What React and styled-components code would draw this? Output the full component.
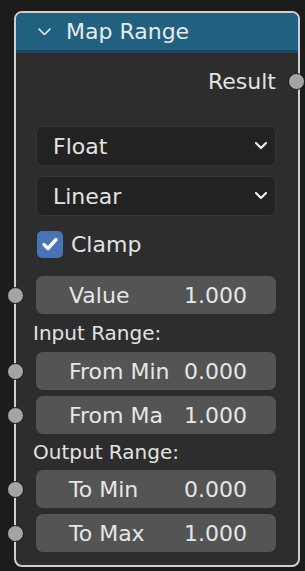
import React from 'react'
import styled, { createGlobalStyle } from 'styled-components'

const GlobalStyle = createGlobalStyle`
  body {
    margin: 0;
    background: #1c1c1c;
    font-family: "DejaVu Sans", "Noto Sans", sans-serif;
  }
`

const Page = styled.div`
  padding: 11px 5px 4px 14px;
`

const Node = styled.div`
  box-sizing: border-box;
  width: 286px;
  border: 2px solid #cfcfcf;
  border-radius: 8px;
  background: #2d2d2d;
`

const Header = styled.div`
  display: flex;
  align-items: center;
  gap: 15px;
  height: 37px;
  padding-left: 22px;
  background: #22607f;
  border-bottom: 3px solid #1b4760;
  border-radius: 6px 6px 0 0;
  color: #e4ebef;
  font-size: 22px;
`

const Body = styled.div`
  display: flex;
  flex-direction: column;
  padding: 14px 22px 13px 20px;
`

const Row = styled.div`
  position: relative;
  display: flex;
  align-items: center;
  height: ${p => p.h || 38}px;
  margin-top: ${p => p.mt || 0}px;
  justify-content: ${p => (p.right ? 'flex-end' : 'flex-start')};
`

const Label = styled.span`
  color: #e2e2e2;
  font-size: 22px;
`

const Heading = styled.div`
  display: flex;
  align-items: center;
  height: ${p => p.h}px;
  margin-left: -3px;
  color: #e2e2e2;
  font-size: 20px;
`

const Socket = styled.span`
  position: absolute;
  top: 50%;
  ${p => (p.side === 'right' ? 'right: -29px;' : 'left: -29px;')}
  width: 17px;
  height: 17px;
  margin-top: -8.5px;
  box-sizing: border-box;
  border-radius: 50%;
  border: 1.5px solid #171717;
  background: #a4a4a4;
`

const Select = styled.div`
  box-sizing: border-box;
  display: flex;
  align-items: center;
  justify-content: space-between;
  height: 40px;
  margin-top: ${p => p.mt}px;
  padding: 0 8px 0 16px;
  background: #222222;
  border: 1px solid #363636;
  border-radius: 7px;
  color: #e2e2e2;
  font-size: 22px;
`

const Check = styled.span`
  display: flex;
  align-items: center;
  justify-content: center;
  width: 26px;
  height: 27px;
  margin-left: 1px;
  margin-right: 8px;
  border-radius: 5px;
  background: #4873b4;
`

const Field = styled.div`
  position: relative;
  box-sizing: border-box;
  display: flex;
  align-items: center;
  justify-content: space-between;
  height: 38px;
  margin-top: ${p => p.mt || 0}px;
  padding: 0 29px 0 33px;
  background: #545454;
  border-radius: 7px;
  color: #e6e6e6;
  font-size: 22px;
  white-space: nowrap;
`

const Chevron = ({ color, w = 12, sw = 1.6 }) => (
  <svg width={w} height={w * 0.6} viewBox="0 0 12 7">
    <path d="M1 1 L6 6 L11 1" fill="none" stroke={color} strokeWidth={sw} strokeLinecap="round" strokeLinejoin="round" />
  </svg>
)

const NumField = ({ label, value, mt }) => (
  <Field mt={mt}>
    <Socket side="left" />
    <span>{label}</span>
    <span>{value}</span>
  </Field>
)

export default function App() {
  return (
    <Page>
      <GlobalStyle />
      <Node>
        <Header>
          <Chevron color="#d8e3ea" w={13} sw={1.5} />
          <span>Map Range</span>
        </Header>
        <Body>
          <Row h={28} right>
            <Label>Result</Label>
            <Socket side="right" />
          </Row>
          <Select mt={31}>
            <span>Float</span>
            <Chevron color="#f0f0f0" w={12} sw={2.2} />
          </Select>
          <Select mt={10}>
            <span>Linear</span>
            <Chevron color="#f0f0f0" w={12} sw={2.2} />
          </Select>
          <Row h={28} mt={14}>
            <Check>
              <svg width="18" height="16" viewBox="0 0 18 16">
                <path d="M3 8.5 L7 12.5 L15 3.5" fill="none" stroke="#fff" strokeWidth="3.4" strokeLinecap="round" strokeLinejoin="round" />
              </svg>
            </Check>
            <Label>Clamp</Label>
          </Row>
          <NumField label="Value" value="1.000" mt={18} />
          <Heading h={38}>Input Range:</Heading>
          <NumField label="From Min" value="0.000" />
          <NumField label="From Ma" value="1.000" mt={6} />
          <Heading h={36}>Output Range:</Heading>
          <NumField label="To Min" value="0.000" />
          <NumField label="To Max" value="1.000" mt={6} />
        </Body>
      </Node>
    </Page>
  )
}
